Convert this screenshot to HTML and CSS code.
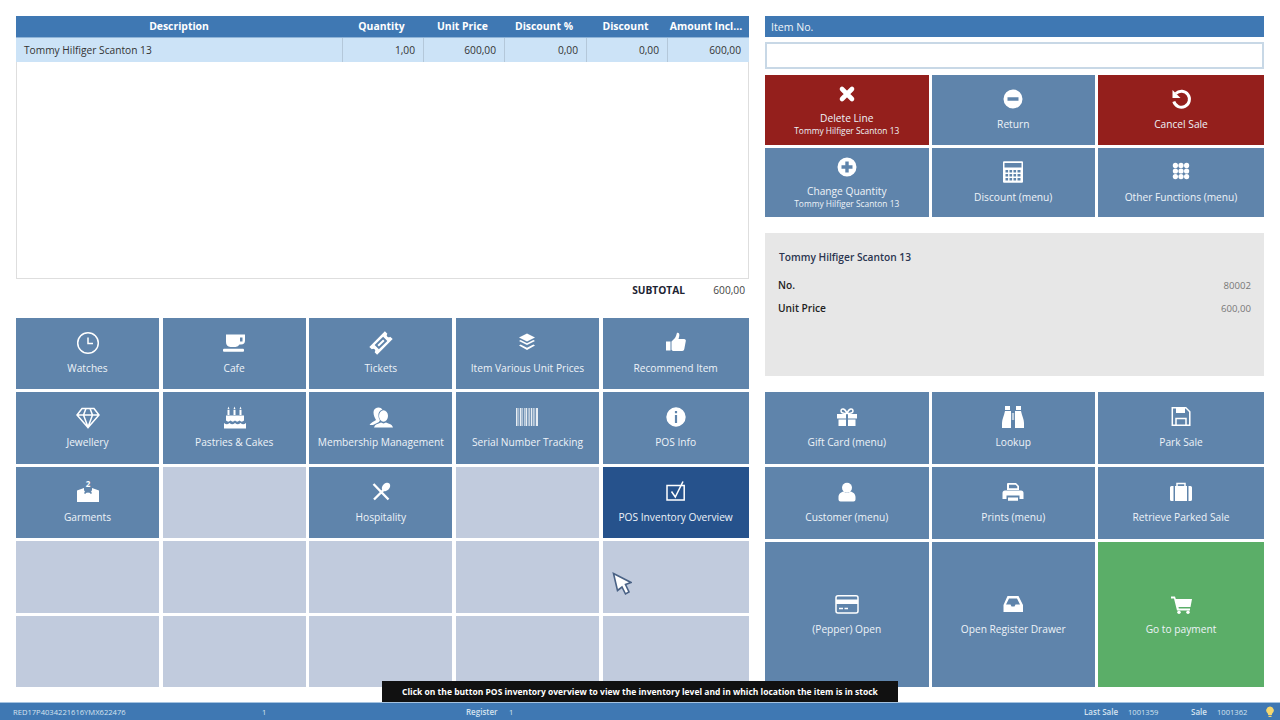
FILE: index.html
```html
<!DOCTYPE html>
<html lang="en">
<head>
    <meta charset="UTF-8">
    <meta name="viewport" content="width=device-width, initial-scale=1.0">
    <title>POS</title>
    <link rel="stylesheet" href="styles.css">
</head>
<body>
    <div class="app">
        <div class="main">
            <div class="left">
                <div class="lines">
                    <table class="lines-table">
                        <thead>
                            <tr>
                                <th class="col-desc">Description</th>
                                <th>Quantity</th>
                                <th>Unit Price</th>
                                <th>Discount %</th>
                                <th>Discount</th>
                                <th>Amount Incl...</th>
                            </tr>
                        </thead>
                        <tbody>
                            <tr>
                                <td class="col-desc">Tommy Hilfiger Scanton 13</td>
                                <td>1,00</td>
                                <td>600,00</td>
                                <td>0,00</td>
                                <td>0,00</td>
                                <td>600,00</td>
                            </tr>
                        </tbody>
                    </table>
                </div>
                <div class="subtotal">
                    <span class="subtotal-label">SUBTOTAL</span>
                    <span class="subtotal-value">600,00</span>
                </div>
                <div class="menu-grid">
                    <div class="tile">
                        <svg class="icon" viewBox="0 0 24 24"><circle class="line" cx="12" cy="12" r="10.3"/><path class="line" d="M12 6.500v6h5"/></svg>
                        <span>Watches</span>
                    </div>
                    <div class="tile">
                        <svg class="icon" viewBox="0 0 24 24"><path d="M4 3.500h19v6a4 4 0 0 1-4 4h-1.500a5 5 0 0 1-4 2.500h-5a5 5 0 0 1-4.500-5zM18 6.500h2.500v4H18z"/><rect x="1" y="17.800" width="21" height="3" rx="1"/></svg>
                        <span>Cafe</span>
                    </div>
                    <div class="tile">
                        <svg class="icon" viewBox="0 0 24 24"><path transform="rotate(-45 12 12)" d="M1 6.500H23V10a2 2 0 0 0 0 4v3.500H1V14a2 2 0 0 0 0-4zM6 9h12v6H6zM8 11h8v2H8z"/></svg>
                        <span>Tickets</span>
                    </div>
                    <div class="tile">
                        <svg class="icon" viewBox="0 0 24 24"><path d="M12 2.500l8 4-8 4-8-4zM4 10l1.600-.9 6.400 3.200 6.400-3.200 1.600.9-8 4zM4 14.500l1.600-.9 6.400 3.200 6.400-3.200 1.600.9-8 4.500z"/></svg>
                        <span>Item Various Unit Prices</span>
                    </div>
                    <div class="tile">
                        <svg class="icon" viewBox="0 0 24 24"><path d="M7.500 10.500L11 7c1-1.500 1.500-3.500 2-5.200 2-.5 2.800 1.500 2.200 3.500L14.500 8H20c1.500 0 2 1 1.800 2l-1.500 8c-.2 1-1 2-2 2H10c-1.500 0-2.500-.7-2.500-1.500zM2 10.500h4.500v9H2z"/></svg>
                        <span>Recommend Item</span>
                    </div>

                    <div class="tile">
                        <svg class="icon" viewBox="0 0 24 24"><path class="line" d="M6 3.500h12l5 6.500-11 12.500L1 10zM1 10h22M7.500 10L12 22l4.500-12M7.500 10L10 3.500M16.500 10L14 3.500"/></svg>
                        <span>Jewellery</span>
                    </div>
                    <div class="tile">
                        <svg class="icon" viewBox="0 0 24 24"><path d="M5.500 5h2v5h-2zM11.500 5h2v5h-2zM17.500 5h2v5h-2zM6.500 1.500l1 2.800h-2zM12.500 1.500l1 2.800h-2zM18.500 1.500l1 2.800h-2zM4 10.500h18v5c-1.500 1.500-3 1.500-4.500 0-1.500 1.500-3 1.500-4.500 0-1.500 1.500-3 1.500-4.500 0-1.500 1.500-3 1.500-4.500 0zM2 18c2.200 1.600 3.400 1.600 5.500 0 2 1.600 3.400 1.600 5.500 0 2 1.600 3.400 1.600 5.500 0 2 1.600 3.400 1.600 5.500 0v5.500H2z"/></svg>
                        <span>Pastries &amp; Cakes</span>
                    </div>
                    <div class="tile">
                        <svg class="icon" viewBox="0 0 24 24"><path d="M4.500 7.500a5 5 0 0 1 9-3 6 6 0 0 0-4 6.500c0 1.500.5 3 1.500 4l-1 2L4 20H.5c1-2 3-3 5-4l1.500-1c-1-2-2.500-4-2.500-7.500z"/><ellipse cx="14.500" cy="11" rx="4.500" ry="5.700"/><path d="M5 22.500c.5-2 2-3 4-3.700l3-1.300 2.500 1 2.500-1 3 1.300c2 .7 3.500 1.700 4 3.700z"/></svg>
                        <span>Membership Management</span>
                    </div>
                    <div class="tile">
                        <svg class="icon barcode" viewBox="0 0 24 24"><path d="M1 3h1.500v18H1zM3.500 3h.7v18h-.7zM5 3h1.500v18H5zM7.400 3h.7v18h-.7zM9 3h.7v18H9zM10.500 3h1.500v18h-1.500zM12.800 3h.7v18h-.7zM14.300 3h.7v18h-.7zM15.800 3h1.500v18h-1.500zM18 3h.7v18H18zM19.500 3h.7v18h-.7zM21 3h2v18h-2z"/></svg>
                        <span>Serial Number Tracking</span>
                    </div>
                    <div class="tile">
                        <svg class="icon" viewBox="0 0 24 24"><path d="M12 2.300a9.700 9.700 0 1 1 0 19.400a9.700 9.700 0 1 1 0-19.400zM10.900 6h2.200v2.300h-2.200zM10.900 10h2.200v8h-2.200z"/></svg>
                        <span>POS Info</span>
                    </div>

                    <div class="tile">
                        <svg class="icon" viewBox="0 0 24 24"><path d="M1 10.500L8 8v1.500a4 3 0 0 0 8 0V8l7 2.500V22H1z"/><path class="hook" d="M8.500 13.500c1-1.500 2.300-2 3.500-2s2.500.5 3.500 2"/><text class="icon-num" x="12" y="7">2</text></svg>
                        <span>Garments</span>
                    </div>
                    <div class="tile empty"></div>
                    <div class="tile">
                        <svg class="icon" viewBox="0 0 24 24"><path class="line thick" d="M4.500 4L19.500 19.500M14.500 10L5 19.500"/><ellipse cx="17" cy="7" rx="3.500" ry="4.800" transform="rotate(45 17 7)"/></svg>
                        <span>Hospitality</span>
                    </div>
                    <div class="tile empty"></div>
                    <div class="tile active">
                        <svg class="icon" viewBox="0 0 24 24"><path class="line" d="M3 5.500h17.200V20H3zM7.500 11.500l3.800 5.500L19 1.500"/></svg>
                        <span>POS Inventory Overview</span>
                    </div>

                    <div class="tile empty"></div>
                    <div class="tile empty"></div>
                    <div class="tile empty"></div>
                    <div class="tile empty"></div>
                    <div class="tile empty"></div>
                    <div class="tile empty"></div>
                    <div class="tile empty"></div>
                    <div class="tile empty"></div>
                    <div class="tile empty"></div>
                    <div class="tile empty"></div>
                </div>
            </div>

            <div class="right">
                <div class="item-label">Item No.</div>
                <input class="item-input" type="text">
                <div class="action-grid">
                    <div class="tile danger two-line">
                        <svg class="icon" viewBox="0 0 24 24"><path class="line cross" d="M7 7l10 10M17 7L7 17"/></svg>
                        <span>Delete Line</span>
                        <small>Tommy Hilfiger Scanton 13</small>
                    </div>
                    <div class="tile">
                        <svg class="icon" viewBox="0 0 24 24"><path d="M12 2.500a9.500 9.500 0 1 1 0 19a9.500 9.500 0 1 1 0-19zM6.500 10.300h11v3.400h-11z"/></svg>
                        <span>Return</span>
                    </div>
                    <div class="tile danger">
                        <svg class="icon" viewBox="0 0 24 24"><path class="line undo" d="M6.800 6.500A8 8 0 1 1 4.800 14.500"/><path d="M3.500 3v8h8z"/></svg>
                        <span>Cancel Sale</span>
                    </div>
                    <div class="tile two-line">
                        <svg class="icon" viewBox="0 0 24 24"><path d="M12 2.500a9.500 9.500 0 1 1 0 19a9.500 9.500 0 1 1 0-19zM10.300 6.500h3.400v3.800h3.800v3.400h-3.800v3.800h-3.400v-3.800H6.500v-3.400h3.800z"/></svg>
                        <span>Change Quantity</span>
                        <small>Tommy Hilfiger Scanton 13</small>
                    </div>
                    <div class="tile">
                        <svg class="icon" viewBox="0 0 24 24"><path d="M3 1.300h18a1 1 0 0 1 1 1v19.500a1 1 0 0 1-1 1H3a1 1 0 0 1-1-1V2.300a1 1 0 0 1 1-1zM3.500 3v4.500h17V3zM4.500 10v2.400h2.600V10zM8.500 10v2.400h2.600V10zM12.500 10v2.400h2.600V10zM16.500 10v2.400h3V10zM4.500 14v2.400h2.600V14zM8.500 14v2.400h2.600V14zM12.500 14v2.400h2.600V14zM16.500 14v2.400h3V14zM4.500 18v2.400h2.600V18zM8.500 18v2.400h2.600V18zM12.500 18v2.400h2.600V18zM16.500 18v2.400h3V18z"/></svg>
                        <span>Discount (menu)</span>
                    </div>
                    <div class="tile">
                        <svg class="icon" viewBox="0 0 24 24"><circle cx="6.400" cy="5.400" r="2.600"/><circle cx="12" cy="5.400" r="2.600"/><circle cx="17.600" cy="5.400" r="2.600"/><circle cx="6.400" cy="11" r="2.600"/><circle cx="12" cy="11" r="2.600"/><circle cx="17.600" cy="11" r="2.600"/><circle cx="6.400" cy="16.600" r="2.600"/><circle cx="12" cy="16.600" r="2.600"/><circle cx="17.600" cy="16.600" r="2.600"/></svg>
                        <span>Other Functions (menu)</span>
                    </div>
                </div>

                <div class="item-panel">
                    <h2>Tommy Hilfiger Scanton 13</h2>
                    <div class="item-row"><b>No.</b><span>80002</span></div>
                    <div class="item-row"><b>Unit Price</b><span>600,00</span></div>
                </div>

                <div class="function-grid">
                    <div class="tile">
                        <svg class="icon" viewBox="0 0 24 24"><path d="M2 9h9v4.500H2zM13 9h9v4.500h-9zM3.500 14.500H11V21H3.500zM13 14.500h7.500V21H13z"/><path class="line" d="M12 8.500C10 3 6 3 6 6c0 2 3 2.500 6 2.500s6-.5 6-2.500c0-3-4-3-6 2.500"/></svg>
                        <span>Gift Card (menu)</span>
                    </div>
                    <div class="tile">
                        <svg class="icon" viewBox="0 0 24 24"><path d="M4 1h5v4H4zM15 1h5v4h-5zM4 6h6v17H1v-5c0-4 2-7 3-12zM14 6h6c1 5 3 8 3 12v5h-9z"/><path class="bridge" d="M10.800 8h2.400v7h-2.400z"/></svg>
                        <span>Lookup</span>
                    </div>
                    <div class="tile">
                        <svg class="icon" viewBox="0 0 24 24"><path class="line" d="M3.300 2.800h13.500l4 4v13.400H3.300zM17 20v-6.500H7V20"/><path d="M7 3h9v5H7z"/></svg>
                        <span>Park Sale</span>
                    </div>
                    <div class="tile">
                        <svg class="icon" viewBox="0 0 24 24"><circle cx="12" cy="7.700" r="5"/><path d="M3.500 17c0-3 2.500-5 5-5.500a6 6 0 0 0 7 0c2.500.5 5 2.500 5 5.500v2.500a2 2 0 0 1-2 2h-13a2 2 0 0 1-2-2z"/></svg>
                        <span>Customer (menu)</span>
                    </div>
                    <div class="tile">
                        <svg class="icon" viewBox="0 0 24 24"><path d="M7 3h8l3 3v4H6V4a1 1 0 0 1 1-1zM8 4.700v3.600h8.300V6.500l-1.800-1.800z"/><path d="M1.500 13A2.500 2.500 0 0 1 4 10.500h16a2.500 2.500 0 0 1 2.500 2.500v6h-4v-3.500h-13V19h-4zM7 17.500h10v3.300H7z"/></svg>
                        <span>Prints (menu)</span>
                    </div>
                    <div class="tile">
                        <svg class="icon" viewBox="0 0 24 24"><path class="line" d="M8 6V3.500h8V6"/><path d="M1 7.500A1.500 1.500 0 0 1 2.500 6h2v15h-2A1.500 1.500 0 0 1 1 19.500zM6 6h12v15H6zM19.500 6h2A1.500 1.500 0 0 1 23 7.500v12a1.500 1.500 0 0 1-1.500 1.500h-2z"/></svg>
                        <span>Retrieve Parked Sale</span>
                    </div>
                    <div class="tile">
                        <svg class="icon" viewBox="0 0 24 24"><rect class="line" x="1" y="3.800" width="22" height="17.200" rx="2"/><path d="M1 7.500h22V12H1zM4 15.800h4v1.500H4zM9.500 15.800h3.500v1.500H9.500z"/></svg>
                        <span>(Pepper) Open</span>
                    </div>
                    <div class="tile">
                        <svg class="icon" viewBox="0 0 24 24"><path d="M6.500 4h11l4.500 9v7H2.500v-7zM8 6.500l-3 6h4.500l1 2h3l1-2H19l-3-6z"/></svg>
                        <span>Open Register Drawer</span>
                    </div>
                    <div class="tile pay">
                        <svg class="icon" viewBox="0 0 24 24"><path d="M2 4.500h4l.8 2.500H23l-1.500 8H9.500l.3 1.500H21v2H8L5 6.500H2z"/><circle cx="10" cy="20.200" r="1.700"/><circle cx="19" cy="20.200" r="1.700"/></svg>
                        <span>Go to payment</span>
                    </div>
                </div>
            </div>
        </div>

        <div class="status-bar">
            <span class="status-serial">RED17P4034221616YMX622476</span>
            <span class="status-one">1</span>
            <b class="status-register">Register</b>
            <span class="status-reg-no">1</span>
            <b class="status-last">Last Sale</b>
            <span class="status-last-no">1001359</span>
            <b class="status-sale">Sale</b>
            <span class="status-sale-no">1001362</span>
            <svg class="bulb" viewBox="0 0 10 12"><path d="M5 .5a3.800 3.800 0 0 1 2.200 6.900L6.800 9H3.200l-.4-1.600A3.800 3.800 0 0 1 5 .5zM3.500 9.700h3V11h-3z"/></svg>
        </div>

        <div class="hint">Click on the button POS inventory overview to view the inventory level and in which location the item is in stock</div>

        <svg class="cursor" viewBox="0 0 20 24"><path d="M1.500 1.500L19 10.500l-5.500 2L17 20l-3.500 2-3.500-7-4.500 3.500z"/></svg>
    </div>
</body>
</html>
```

FILE: styles.css
```css
* {
    box-sizing: border-box;
    margin: 0;
    padding: 0;
}

body {
    background-color: white;
    font-family: 'Open Sans', 'Noto Sans', sans-serif;
    font-size: 10.2px;
    overflow: hidden;
}

.app {
    position: relative;
    width: 1280px;
    height: 720px;
    display: flex;
    flex-direction: column;
}

.main {
    flex: 1;
    display: flex;
    gap: 16px;
    padding: 16px 16px 15px;
}

.left {
    width: 733px;
    display: flex;
    flex-direction: column;
}

.right {
    width: 499px;
    display: flex;
    flex-direction: column;
}

/* sale lines */
.lines {
    height: 263px;
    border: 1px solid #dedede;
    border-top: none;
}

.lines-table {
    width: 733px;
    margin-left: -1px;
    border-collapse: separate;
    border-spacing: 0;
    table-layout: fixed;
}

.lines-table th {
    height: 22px;
    padding: 0 2px 2px 0;
    background-color: #3f78b3;
    border-bottom: 1px solid #8fb4d8;
    color: white;
    font-size: 10.4px;
    font-weight: 700;
    text-align: center;
    width: 81px;
}

.lines-table th:nth-child(4),
.lines-table th:nth-child(6) {
    width: 82px;
}

.lines-table th:nth-child(6) {
    padding-right: 4px;
}

.lines-table td {
    height: 24px;
    padding: 0 8px 1px 0;
    background-color: #cce3f7;
    border-left: 1px solid #b4c8da;
    color: #333;
    text-align: right;
}

.lines-table th.col-desc {
    width: 326px;
    padding-right: 0;
}

.lines-table td.col-desc {
    border-left: none;
    text-align: left;
    padding-left: 8px;
}

.subtotal {
    height: 39px;
    padding-right: 4px;
    display: flex;
    justify-content: flex-end;
    color: #1d2433;
    line-height: 22px;
}

.subtotal-label {
    font-weight: 700;
}

.subtotal-value {
    width: 60px;
    text-align: right;
    color: #444;
}

/* tiles */
.tile {
    display: flex;
    flex-direction: column;
    align-items: center;
    justify-content: center;
    padding-bottom: 0.5px;
    background-color: #5f84ab;
    color: #eef3f8;
    line-height: 15px;
    text-align: center;
    white-space: nowrap;
}

.tile small {
    margin-top: -1px;
    font-size: 8.4px;
    line-height: 12px;
}

.icon {
    flex: none;
    width: 24px;
    height: 24px;
    margin-bottom: 6px;
    fill: white;
    fill-rule: evenodd;
    overflow: visible;
}

.two-line .icon {
    margin-bottom: 5px;
}

.icon .line,
.icon .hook {
    fill: none;
    stroke: white;
    stroke-width: 1.5;
}

.icon .hook {
    stroke: #5f84ab;
}

.icon .thick {
    stroke-width: 2.4;
}

.icon .cross {
    stroke-width: 4.6;
    stroke-linecap: round;
}

.icon .undo {
    stroke-width: 3;
}

.icon .bridge {
    opacity: 0.6;
}

.icon-num {
    font-size: 8px;
    font-weight: 700;
    text-anchor: middle;
}

.barcode {
    opacity: 0.85;
}

.empty {
    background-color: #c1cbdd;
}

.active {
    background-color: #26528c;
}

.danger {
    background-color: #941f1c;
}

.pay {
    background-color: #5bae68;
}

.menu-grid {
    height: 369px;
    display: grid;
    grid-template-columns: repeat(4, 143px) 146px;
    grid-template-rows: repeat(5, 1fr);
    gap: 3px 3.67px;
}

.action-grid,
.function-grid {
    display: grid;
    grid-template-columns: 163.5px 163.5px 166px;
    gap: 3px;
}

.action-grid {
    grid-template-rows: 69.5px 69.5px;
}

.function-grid {
    grid-template-rows: 72px 72px 145px;
}

/* item entry and info */
.item-label {
    height: 21px;
    padding-left: 6px;
    background-color: #3f78b3;
    color: #eef3f8;
    font-size: 10.6px;
    line-height: 23px;
}

.item-input {
    height: 27px;
    margin: 5px 0 6px;
    border: 2px solid #c8d8e6;
    background-color: white;
}

.item-panel {
    height: 143px;
    margin: 16px 0;
    padding: 16px 13px;
    background-color: #e7e7e7;
}

.item-panel h2 {
    margin: 0 0 9px 1px;
    color: #2b3550;
    font-size: 10.2px;
    font-weight: 600;
    line-height: 16px;
}

.item-row {
    display: flex;
    justify-content: space-between;
    height: 23px;
    line-height: 23px;
    color: #777;
    font-size: 9.6px;
}

.item-row b {
    color: #222;
    font-size: 10.2px;
    font-weight: 600;
}

/* bottom bar */
.status-bar {
    height: 18px;
    display: flex;
    align-items: center;
    background-color: #3f78b3;
    border-top: 1px solid #a5c3e0;
    color: #d5e3f0;
    font-size: 7.6px;
}

.status-bar b {
    font-size: 8px;
    font-weight: 600;
}

.status-serial {
    width: 249px;
    margin-left: 13px;
}

.status-one {
    width: 204px;
}

.status-register {
    width: 43px;
}

.status-reg-no {
    width: 575px;
}

.status-last {
    width: 44px;
}

.status-last-no {
    width: 63px;
}

.status-sale {
    width: 26px;
}

.status-sale-no {
    width: 48px;
}

.bulb {
    width: 10px;
    height: 12px;
    fill: #f5d76e;
}

/* overlays */
.hint {
    position: absolute;
    left: 382px;
    top: 681px;
    width: 516px;
    height: 21px;
    background-color: #111;
    color: white;
    font-size: 8.5px;
    font-weight: 700;
    line-height: 21px;
    text-align: center;
}

.cursor {
    position: absolute;
    left: 612px;
    top: 572px;
    width: 20px;
    height: 24px;
    fill: white;
    stroke: #4a6285;
    stroke-width: 1.6;
}
```
